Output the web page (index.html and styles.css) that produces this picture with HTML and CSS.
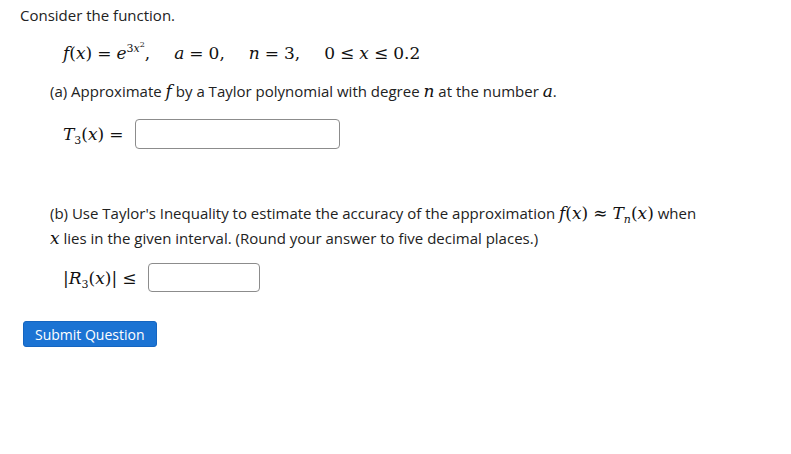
FILE: index.html
```html
<!DOCTYPE html>
<html lang="en">
<head>
    <meta charset="UTF-8">
    <title>Question</title>
    <link rel="stylesheet" href="styles.css">
</head>
<body>
    <div class="question">
        <p class="intro">Consider the function.</p>
        <div class="formula">
            <span class="m"><i>f</i>(<i>x</i>)<span class="op">=</span><i>e</i><sup>3<i>x</i><sup>2</sup></sup>,</span>
            <span class="m"><i>a</i><span class="op">=</span>0,</span>
            <span class="m"><i>n</i><span class="op">=</span>3,</span>
            <span class="m">0<span class="op">≤</span><i>x</i><span class="op">≤</span>0.2</span>
        </div>

        <div class="part">
            <p>(a) Approximate <span class="m"><i>f</i></span> by a Taylor polynomial with degree <span class="m"><i>n</i></span> at the number <span class="m"><i>a</i></span>.</p>
            <div class="answer-row">
                <span class="m"><i>T</i><sub>3</sub>(<i>x</i>)<span class="op">=</span></span>
                <input type="text" class="box wide">
            </div>
        </div>

        <div class="part partb">
            <p>(b) Use Taylor's Inequality to estimate the accuracy of the approximation <span class="m"><i>f</i>(<i>x</i>)<span class="op">≈</span><i>T</i><sub><i>n</i></sub>(<i>x</i>)</span> when<br><span class="m"><i>x</i></span> lies in the given interval. (Round your answer to five decimal places.)</p>
            <div class="answer-row second">
                <span class="m">|<i>R</i><sub>3</sub>(<i>x</i>)|<span class="op">≤</span></span>
                <input type="text" class="box narrow">
            </div>
        </div>

        <button class="submit">Submit Question</button>
    </div>
</body>
</html>
```

FILE: styles.css
```css
* {
    margin: 0;
    padding: 0;
    box-sizing: border-box;
}
body {
    font-family: "Open Sans", sans-serif;
    font-size: 15px;
    color: #222;
    background: #fff;
}
.question {
    padding: 5px 20px;
}
.intro {
    line-height: 20px;
}
.m {
    font-family: "DejaVu Serif", serif;
    font-size: 17px;
    color: #111;
}
.m i {
    font-style: italic;
}
.m .op {
    margin: 0 5px;
}
.m sup, .m sub {
    font-size: 11px;
    line-height: 0;
}
.m sup sup {
    font-size: 8px;
}
.formula {
    display: flex;
    gap: 24px;
    padding: 18px 0 0 43px;
    height: 54px;
}
.part {
    padding-left: 30px;
}
.part p {
    line-height: 25px;
    width: 690px;
}
.answer-row {
    display: flex;
    align-items: center;
    gap: 7px;
    padding-left: 13px;
    margin-top: 15px;
}
.answer-row.second {
    margin-top: 12px;
}
.box {
    height: 30px;
    border: 1px solid #8c8c8c;
    border-radius: 4px;
    background: #fff;
}
.wide {
    width: 205px;
}
.narrow {
    width: 112px;
    height: 29px;
}
.partb {
    margin-top: 52px;
}
.submit {
    margin: 29px 0 0 3px;
    background: #1b73d3;
    color: #fff;
    border: 1px solid #1565c0;
    border-radius: 3px;
    font-family: "Open Sans", sans-serif;
    font-size: 14px;
    padding: 3px 11px;
    height: 26px;
}
```
